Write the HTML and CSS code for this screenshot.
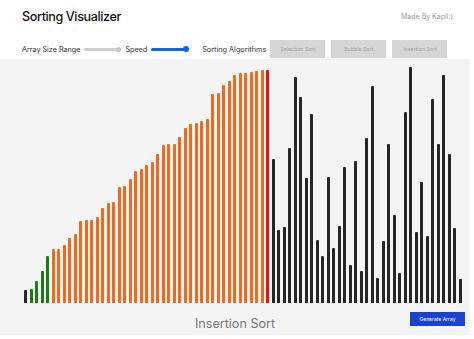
FILE: index.html
```html
<!DOCTYPE html>
<html lang="en">
<head>
    <meta charset="UTF-8">
    <meta name="viewport" content="width=device-width, initial-scale=1.0">
    <title>Sorting Visualizer</title>
    <link rel="stylesheet" href="styles.css">
</head>
<body>
    <div class="header">
        <div class="top-row">
            <h1 class="title">Sorting Visualizer</h1>
            <span class="made-by">Made By Kapil:)</span>
        </div>
        <div class="controls">
            <label class="ctrl-label">Array Size Range</label>
            <input type="range" class="slider size-slider" min="5" max="80" value="80">
            <label class="ctrl-label">Speed</label>
            <input type="range" class="slider speed-slider" min="1" max="10" value="10">
            <span class="ctrl-label algo-label">Sorting Algorithms</span>
            <button class="algo-btn">Selection Sort</button>
            <button class="algo-btn">Bubble Sort</button>
            <button class="algo-btn">Insertion Sort</button>
        </div>
    </div>

    <div class="chart">
        <div class="bars" id="bars">
            <!-- bars get added by the script below -->
        </div>
        <div class="footer">
            <span></span>
            <h2 class="algo-name">Insertion Sort</h2>
            <button class="gen-btn">Generate Array</button>
        </div>
    </div>

    <script>
        // heights of the bars in px
        const heights = [13, 14, 22, 32, 47, 54, 54, 58, 65, 69, 82, 83, 83, 86, 95, 100, 101, 116, 117, 124,
            132, 134, 138, 141, 149, 158, 159, 159, 166, 175, 179, 180, 182, 184, 209, 210, 218, 222, 228, 230,
            230, 231, 232, 233, 233, 144, 73, 76, 155, 226, 206, 125, 189, 63, 47, 126, 55, 77, 136, 38,
            142, 32, 165, 217, 25, 62, 159, 88, 30, 191, 236, 71, 121, 67, 204, 159, 228, 149, 75, 24];

        const barsEl = document.getElementById('bars');

        heights.forEach((h, i) => {
            const bar = document.createElement('div');
            bar.className = 'bar';
            if (i >= 1 && i <= 4) {
                bar.classList.add('bar-green');
            } else if (i >= 5 && i <= 43) {
                bar.classList.add('bar-orange');
            } else if (i === 44) {
                bar.classList.add('bar-red');
            }
            bar.style.height = h + 'px';
            barsEl.appendChild(bar);
        });
    </script>
</body>
</html>
```

FILE: styles.css
```css
/* Base styles */
body {
    font-family: 'Inter', 'Noto Sans', sans-serif;
    background-color: #fff;
    margin: 0;
    padding: 0;
    width: 474px;
    height: 339px;
    overflow: hidden;
}

/* Header */
.header {
    background: #fff;
    margin: 0 6px 0 10px;
    height: 59px;
    padding: 0 12px;
}

.top-row {
    display: flex;
    justify-content: space-between;
    align-items: center;
    height: 32px;
    padding-top: 0;
}

.title {
    margin: 0;
    font-size: 12.6px;
    font-weight: 500;
    color: #111;
    letter-spacing: -0.4px;
}

.made-by {
    font-size: 7px;
    color: #999;
    margin-right: 3px;
}

.controls {
    display: flex;
    align-items: center;
    height: 18px;
    margin-top: 8px;
}

.ctrl-label {
    font-size: 7.2px;
    color: #333;
}

.algo-label {
    margin-left: 9px;
    font-size: 7.3px;
}

/* Sliders */
.slider {
    -webkit-appearance: none;
    appearance: none;
    width: 37px;
    height: 3px;
    border-radius: 2px;
    margin: 0 4px;
    padding: 0;
    outline: none;
}

.size-slider {
    background: #cfcfcf;
}

.speed-slider {
    width: 38px;
    background: #1565e0;
}

.slider::-webkit-slider-thumb {
    -webkit-appearance: none;
    appearance: none;
    width: 5px;
    height: 5px;
    border-radius: 50%;
    border: none;
}

.size-slider::-webkit-slider-thumb {
    background: #c4c4c4;
}

.speed-slider::-webkit-slider-thumb {
    background: #1565e0;
    width: 6px;
    height: 6px;
}

/* Algorithm buttons */
.algo-btn {
    font-family: inherit;
    width: 55px;
    height: 18px;
    margin-left: 6px;
    padding: 0;
    border: none;
    background-color: #d6d6d6;
    color: #a3a3a3;
    font-size: 5.3px;
    cursor: pointer;
}

.algo-btn:first-of-type {
    margin-left: 4px;
}

/* Chart */
.chart {
    background-color: #f4f4f4;
    width: 470px;
    height: 276px;
    display: flex;
    flex-direction: column;
}

.bars {
    height: 244px;
    display: flex;
    align-items: flex-end;
    gap: 2.5px;
    padding-left: 24px;
}

.bar {
    width: 3px;
    background-color: #262626;
    border-radius: 1px 1px 0 0;
}

.bar-green {
    background-color: #1d7a16;
}

.bar-orange {
    background-color: #ef6a1c;
}

.bar-red {
    background-color: #e5121c;
}

.footer {
    display: grid;
    grid-template-columns: 1fr auto 1fr;
    height: 32px;
}

.algo-name {
    margin: 0;
    padding-top: 13px;
    font-size: 12.6px;
    font-weight: 400;
    color: #777;
}

.gen-btn {
    justify-self: end;
    align-self: start;
    margin-top: 9px;
    margin-right: 5px;
    width: 55px;
    height: 14px;
    padding: 0;
    border: none;
    background-color: #1b43d1;
    color: #fff;
    font-family: inherit;
    font-size: 5px;
    cursor: pointer;
}
```
